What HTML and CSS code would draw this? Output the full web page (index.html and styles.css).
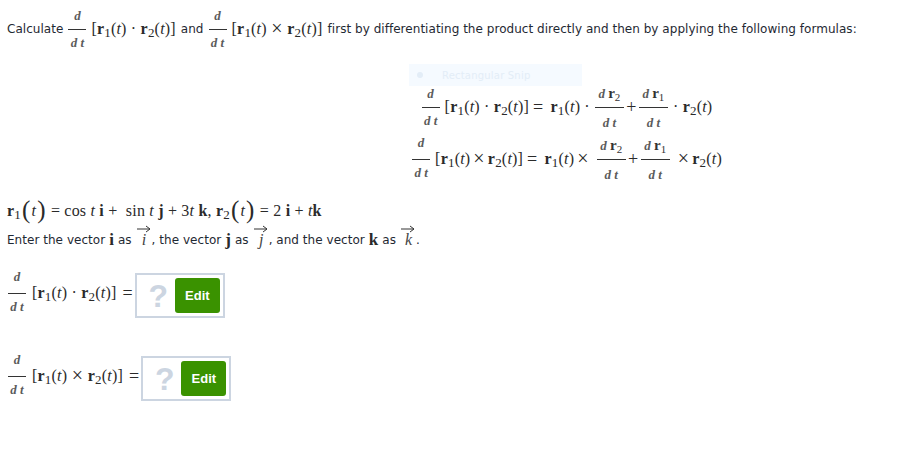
FILE: index.html
```html
<!DOCTYPE html>
<html lang="en">
<head>
<meta charset="utf-8">
<title>Vector products</title>
<link rel="stylesheet" href="styles.css">
</head>
<body>
<div class="page">
  <div class="line intro">
    <span>Calculate</span>
    <span class="math"><span class="frac"><span class="num">d</span><span class="den">d t</span></span><span class="expr">[<b>r</b><sub>1</sub>(<i>t</i>) · <b>r</b><sub>2</sub>(<i>t</i>)]</span></span>
    <span>and</span>
    <span class="math"><span class="frac"><span class="num">d</span><span class="den">d t</span></span><span class="expr">[<b>r</b><sub>1</sub>(<i>t</i>)<span class="op">×</span><b>r</b><sub>2</sub>(<i>t</i>)]</span></span>
    <span>first by differentiating the product directly and then by applying the following formulas:</span>
  </div>

  <div class="formulas">
    <div class="snip"><span class="snip-dot"></span><span>Rectangular Snip</span></div>
    <div class="formula math">
      <span class="frac"><span class="num">d</span><span class="den">d t</span></span>
      <span class="expr">[<b>r</b><sub>1</sub>(<i>t</i>) · <b>r</b><sub>2</sub>(<i>t</i>)]<span class="eq">=</span><b>r</b><sub>1</sub>(<i>t</i>) ·</span>
      <span class="frac wide"><span class="num">d <b>r</b><sub>2</sub></span><span class="den">d t</span></span><span class="plus">+</span><span class="frac wide"><span class="num">d <b>r</b><sub>1</sub></span><span class="den">d t</span></span>
      <span class="expr">· <b>r</b><sub>2</sub>(<i>t</i>)</span>
    </div>
    <div class="formula math">
      <span class="frac tall"><span class="num">d</span><span class="den">d t</span></span>
      <span class="expr">[<b>r</b><sub>1</sub>(<i>t</i>)<span class="op">×</span><b>r</b><sub>2</sub>(<i>t</i>)]<span class="eq">=</span><b>r</b><sub>1</sub>(<i>t</i>)<span class="op">×</span></span>
      <span class="frac wide"><span class="num">d <b>r</b><sub>2</sub></span><span class="den">d t</span></span><span class="plus">+</span><span class="frac wide"><span class="num">d <b>r</b><sub>1</sub></span><span class="den">d t</span></span>
      <span class="expr"><span class="op">×</span><b>r</b><sub>2</sub>(<i>t</i>)</span>
    </div>
  </div>

  <div class="given"><b>r</b><sub>1</sub><span class="big">(</span><i>t</i><span class="big">)</span> = cos <i>t</i> <b>i</b> + &nbsp;sin <i>t</i> <b>j</b> + 3<i>t</i> <b>k</b>, <b>r</b><sub>2</sub><span class="big">(</span><i>t</i><span class="big">)</span> = 2 <b>i</b> + <i>t</i><b>k</b></div>

  <div class="line enter">
    <span>Enter the vector</span><b class="bold-serif">i</b><span>as</span>
    <span class="vec"><svg class="arrow" viewBox="0 0 16 8"><path d="M1 4H14M10 1l4 3-4 3"/></svg><i>i</i></span><span class="after">, the vector</span><b class="bold-serif">j</b><span>as</span>
    <span class="vec"><svg class="arrow" viewBox="0 0 16 8"><path d="M1 4H14M10 1l4 3-4 3"/></svg><i>j</i></span><span class="after">, and the vector</span><b class="bold-serif">k</b><span>as</span>
    <span class="vec"><svg class="arrow" viewBox="0 0 16 8"><path d="M1 4H14M10 1l4 3-4 3"/></svg><i>k</i></span><span class="after">.</span>
  </div>

  <div class="answer first">
    <span class="math answer-math"><span class="frac"><span class="num">d</span><span class="den">d t</span></span><span class="expr">[<b>r</b><sub>1</sub>(<i>t</i>) · <b>r</b><sub>2</sub>(<i>t</i>)]<span class="eq">=</span></span></span>
    <div class="box"><span class="q">?</span><button class="edit">Edit</button></div>
  </div>
  <div class="answer second">
    <span class="math answer-math"><span class="frac"><span class="num">d</span><span class="den">d t</span></span><span class="expr">[<b>r</b><sub>1</sub>(<i>t</i>)<span class="op">×</span><b>r</b><sub>2</sub>(<i>t</i>)]<span class="eq">=</span></span></span>
    <div class="box"><span class="q">?</span><button class="edit">Edit</button></div>
  </div>
</div>
</body>
</html>
```
FILE: styles.css
```css
* { box-sizing: border-box; }
html, body { margin: 0; background: #fff; }
body { font-family: "DejaVu Sans", Verdana, sans-serif; font-size: 12px; letter-spacing: 0.035px; color: #1f2933; }
.page { padding: 7px 0 0 7px; width: 905px; height: 449px; overflow: hidden; }

.line { display: flex; align-items: center; gap: 5px; white-space: pre; }
.intro { height: 43px; }

.math { display: inline-flex; align-items: center; font-family: "Liberation Serif", "Times New Roman", serif; font-size: 16px; letter-spacing: 0.2px; color: #2a2a2a; white-space: pre; }
.math sub { font-size: 13px; line-height: 0; vertical-align: -3px; }
.math i { font-style: italic; }
.expr { margin-left: 5px; }
.op { font-size: 20px; line-height: 0; margin: 0 4.5px; vertical-align: -1px; }
.eq { font-size: 18px; line-height: 0; margin: 0 7px 0 4px; vertical-align: -1px; }

.frac { display: inline-flex; flex-direction: column; align-items: center; width: 18px; font-size: 13px; font-style: italic; font-weight: bold; letter-spacing: 0; color: #5b5b5b; }
.frac.wide { width: 29px; }
.num { display: block; width: 100%; height: 15px; line-height: 15px; text-align: center; border-bottom: 1px solid #333; box-sizing: content-box; padding-bottom: 6px; }
.den { display: block; height: 15px; line-height: 15px; padding-top: 5px; box-sizing: content-box; }
.frac b { font-style: normal; font-size: 15px; color: #333; }
.frac sub { font-style: normal; font-weight: normal; font-size: 11px; color: #333; }
.plus { font-size: 18px; width: 15px; text-align: center; }

.formulas { position: relative; display: flex; flex-direction: column; align-items: center; gap: 10px; width: 320px; margin: 36px 0 0 400px; height: 105px; }
.snip { position: absolute; left: 2px; top: -22px; width: 173px; height: 22px; display: flex; align-items: center; gap: 19px; padding-left: 8px; background: #f5faff; color: #e3edf7; font-size: 10px; letter-spacing: 0.2px; }
.snip-dot { width: 6px; height: 6px; border-radius: 50%; background: #e3edf7; }
.formula { height: 42px; }
.formula .op { margin: 0 3px; }
.formula .frac.wide { margin-left: 5px; }
.formula .plus + .frac.wide { margin-left: 0; }
.formula .wide .den { padding-top: 7px; height: 13px; }
.tall .num, .answer .num { line-height: 9px; }

.given { margin-top: 8px; height: 24px; line-height: 24px; font-family: "Liberation Serif", "Times New Roman", serif; font-size: 16px; letter-spacing: 0.2px; color: #2a2a2a; white-space: pre; }
.given sub { font-size: 13px; line-height: 0; vertical-align: -3px; }
.big { font-size: 25px; line-height: 0; margin: 0 1px; vertical-align: -2px; }

.enter { margin-top: 2px; height: 29px; gap: 4px; }
.bold-serif { font-family: "Liberation Serif", serif; font-size: 17px; color: #2a2a2a; }
.vec { display: inline-flex; flex-direction: column; align-items: center; width: 15px; margin: -8px 1px 0; font-family: "Liberation Serif", serif; font-size: 16px; color: #444; line-height: 13px; }
.arrow { width: 16px; height: 8px; fill: none; stroke: #333; stroke-width: 1; }
.after { margin-left: -5px; }

.answer { display: flex; align-items: center; height: 45px; }
.answer.first { margin-top: 19px; }
.answer.second { margin-top: 38px; }
.answer-math { margin-bottom: 6px; padding-left: 1px; }
.answer-math .expr { margin-left: 6px; }
.answer-math .eq { margin: 0 2px 0 6px; }
.box { display: flex; align-items: center; flex: none; width: 90px; height: 45px; padding: 0 3px 0 5px; border: 2px solid #ccd5e1; background: #fff; }
.q { flex: 1; font-family: "Liberation Sans", Arial, sans-serif; font-weight: bold; font-size: 32px; color: #ccd5e1; text-align: center; line-height: 1; }
.edit { flex: none; width: 45px; height: 35px; border: 0; border-radius: 3px; padding: 0; background: #3a9200; color: #fff; font-family: "Liberation Sans", Arial, sans-serif; font-weight: bold; font-size: 13px; }
```
